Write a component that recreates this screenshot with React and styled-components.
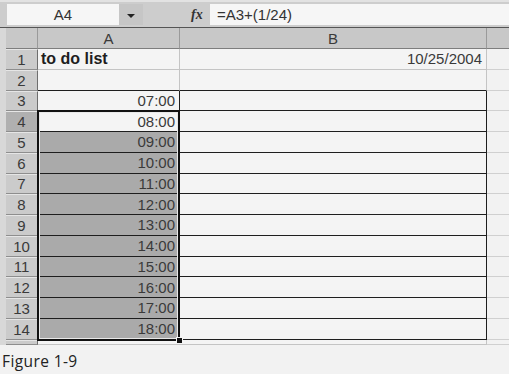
import styled, { createGlobalStyle, css } from "styled-components";

const GlobalStyle = createGlobalStyle`
  html, body {
    margin: 0;
    padding: 0;
    background: #f2f2f2;
  }
  * {
    box-sizing: border-box;
  }
`;

const Page = styled.div`
  width: 509px;
  height: 374px;
  display: flex;
  flex-direction: column;
  font-family: "Liberation Sans", Arial, sans-serif;
  color: #333;
  overflow: hidden;
`;

/* formula bar */
const FormulaBar = styled.div`
  height: 27px;
  display: flex;
  align-items: center;
  padding-left: 7px;
  background: #cdcdcd;
  border-top: 2px solid #e2e2e2;
`;

const NameBox = styled.div`
  width: 112px;
  height: 21px;
  background: #f6f6f6;
  display: flex;
  align-items: center;
  justify-content: center;
  font-size: 15px;
`;

const DropButton = styled.div`
  width: 24px;
  height: 21px;
  display: flex;
  align-items: center;
  justify-content: center;
  background: #c6c6c6;
`;

const Arrow = styled.span`
  width: 0;
  height: 0;
  border-left: 4px solid transparent;
  border-right: 4px solid transparent;
  border-top: 4px solid #222;
  margin-top: 2px;
`;

const FxLabel = styled.span`
  margin-left: 48px;
  width: 19px;
  font-family: "Liberation Serif", "Times New Roman", serif;
  font-style: italic;
  font-weight: bold;
  font-size: 14px;
  color: #333;
`;

const FormulaInput = styled.div`
  flex: 1;
  height: 21px;
  display: flex;
  align-items: center;
  padding-left: 7px;
  background: #f6f6f6;
  font-size: 15px;
`;

/* sheet */
const Sheet = styled.div`
  display: flex;
`;

const LeftEdge = styled.div`
  width: 6px;
  background: #d8d8d8;
  border-top: 1px solid #555;
`;

const Grid = styled.div`
  flex: 1;
  display: grid;
  grid-template-columns: 32px 142px 307px 1fr;
  grid-template-rows: 21px repeat(14, 20.75px) 5px;
  border-top: 1px solid #555;
`;

const placed = css`
  grid-row: ${(p) => p.$row};
  grid-column: ${(p) => p.$col};
`;

const ColHead = styled.div`
  ${placed}
  background: #c8c8c8;
  border-right: 1px solid #9a9a9a;
  border-bottom: 1px solid #7e7e7e;
  display: flex;
  align-items: center;
  justify-content: center;
  font-size: 15px;
  color: #3a3a3a;
`;

const RowHead = styled.div`
  ${placed}
  background: ${(p) => (p.$active ? "#b0b0b0" : "#cbcbcb")};
  border-top: 1px solid #e6e6e6;
  border-right: 1px solid #6e6e6e;
  border-bottom: 1px solid #8e8e8e;
  display: flex;
  align-items: center;
  justify-content: center;
  font-size: 15px;
  color: #3a3a3a;
`;

const Cell = styled.div`
  ${placed}
  background: ${(p) => (p.$selected ? "#aaaaaa" : "#f4f4f4")};
  border-bottom: 1px solid ${(p) => (p.$boxBottom ? "#1e1e1e" : "#c4c4c4")};
  border-right: 1px solid ${(p) => (p.$boxRight ? "#1e1e1e" : "#c4c4c4")};
  display: flex;
  align-items: center;
  justify-content: ${(p) => (p.$right ? "flex-end" : "flex-start")};
  padding: 0 4px 0 3px;
  font-size: ${(p) => (p.$bold ? "16px" : "15px")};
  font-weight: ${(p) => (p.$bold ? "bold" : "normal")};
  color: ${(p) => (p.$bold ? "#1e1e1e" : "#3a3a3a")};
  white-space: nowrap;
`;

const Filler = styled.div`
  ${placed}
  background: ${(p) => (p.$head ? "#c8c8c8" : "#f2f2f2")};
  border-bottom: 1px solid ${(p) => (p.$head ? "#7e7e7e" : "#d0d0d0")};
`;

const Selection = styled.div`
  grid-column: 2;
  grid-row: 5 / 16;
  margin: -1px 0 -1px -1px;
  border: 2px solid #111;
  box-shadow: inset 0 0 0 1px #e8e8e8;
  position: relative;
  pointer-events: none;
`;

const FillHandle = styled.span`
  position: absolute;
  right: -5px;
  bottom: -5px;
  width: 7px;
  height: 7px;
  background: #111;
  border: 1px solid #f4f4f4;
`;

const Caption = styled.div`
  margin-top: 5px;
  padding-left: 2px;
  font-family: "Open Sans", "Noto Sans", sans-serif;
  font-size: 15.5px;
  letter-spacing: 0.4px;
  color: #222;
`;

const times = [
  "07:00", "08:00", "09:00", "10:00", "11:00", "12:00",
  "13:00", "14:00", "15:00", "16:00", "17:00", "18:00",
];

const rows = [
  { a: "to do list", b: "10/25/2004", bold: true },
  { a: "", b: "" },
  ...times.map((t) => ({ a: t, b: "" })),
];

export default function App() {
  return (
    <Page>
      <GlobalStyle />
      <FormulaBar>
        <NameBox>A4</NameBox>
        <DropButton>
          <Arrow />
        </DropButton>
        <FxLabel>fx</FxLabel>
        <FormulaInput>=A3+(1/24)</FormulaInput>
      </FormulaBar>

      <Sheet>
        <LeftEdge />
        <Grid>
          <ColHead $row={1} $col={1} />
          <ColHead $row={1} $col={2}>A</ColHead>
          <ColHead $row={1} $col={3}>B</ColHead>
          <Filler $row={1} $col={4} $head />

          {rows.map((r, i) => {
            const n = i + 1;
            const line = n + 1;
            const boxed = n >= 3;
            return [
              <RowHead key={`h${n}`} $row={line} $col={1} $active={n === 4}>
                {n}
              </RowHead>,
              <Cell
                key={`a${n}`}
                $row={line}
                $col={2}
                $right={!r.bold}
                $bold={r.bold}
                $selected={n >= 5}
                $boxBottom={n >= 2}
                $boxRight={boxed}
              >
                {r.a}
              </Cell>,
              <Cell
                key={`b${n}`}
                $row={line}
                $col={3}
                $right
                $boxBottom={n >= 2}
                $boxRight={boxed}
              >
                {r.b}
              </Cell>,
              <Filler key={`f${n}`} $row={line} $col={4} />,
            ];
          })}

          <RowHead $row={16} $col={1} />
          <Cell $row={16} $col={2} />
          <Cell $row={16} $col={3} />
          <Filler $row={16} $col={4} />

          <Selection>
            <FillHandle />
          </Selection>
        </Grid>
      </Sheet>

      <Caption>Figure 1-9</Caption>
    </Page>
  );
}
